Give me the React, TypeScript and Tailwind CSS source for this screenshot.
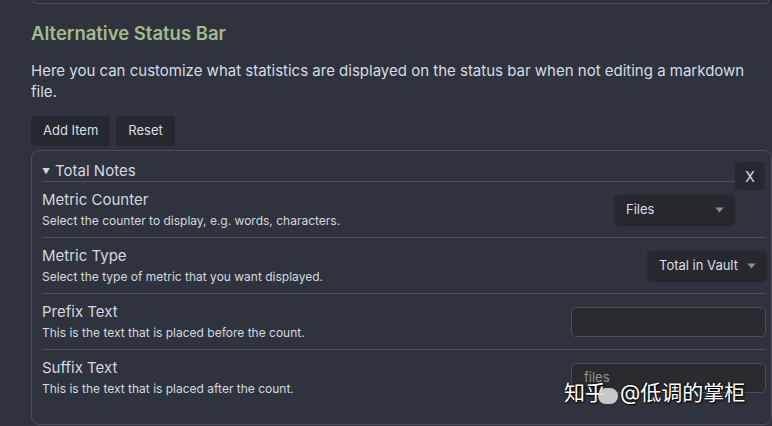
import React from "react";

function Select({ value, className = "" }: { value: string; className?: string }) {
  return (
    <div
      className={`flex h-[29px] items-center justify-between rounded-[4px] bg-[#26282d] pl-[11px] pr-[10px] text-[13px] text-[#dcdfe5] shadow-[0_1px_3px_rgba(0,0,0,0.45)] ${className}`}
    >
      <span>{value}</span>
      <svg width="9" height="6" viewBox="0 0 9 6" className="ml-2">
        <path d="M0.5 0.5 L8.5 0.5 L4.5 5.5 Z" fill="#8d919a" />
      </svg>
    </div>
  );
}

function Row({
  name,
  desc,
  control,
}: {
  name: string;
  desc: string;
  control: React.ReactNode;
}) {
  return (
    <div className="flex items-center justify-between border-t border-[#4b505b] pt-[8px] pb-[8px]">
      <div className="flex flex-col">
        <div className="text-[15px] leading-[20px] text-[#d4d8e0]">{name}</div>
        <div className="mt-[3px] text-[12px] leading-[16px] text-[#d6d9df]">{desc}</div>
      </div>
      {control}
    </div>
  );
}

export default function App() {
  return (
    <div
      className="relative h-[426px] w-[772px] overflow-hidden bg-[#2e333e]"
      style={{ fontFamily: "Inter, 'Noto Sans', 'Noto Sans CJK SC', sans-serif" }}
    >
      <div className="ml-[33px] mr-[3px] h-[4px] rounded-b-[6px] border-x border-b border-[#4b505b]" />
      <div className="pl-[31px]">
        <h2 className="mt-[17px] text-[18.5px] font-semibold leading-[24px] text-[#a3bb8b]">
          Alternative Status Bar
        </h2>
        <p className="mt-[15px] pr-[20px] text-[15px] leading-[21px] text-[#d8dce4]">
          Here you can customize what statistics are displayed on the status bar when not editing a markdown file.
        </p>
        <div className="mt-[14px] flex gap-[6px]">
          <button className="h-[30px] rounded-[4px] bg-[#25282f] px-[12px] text-[13px] text-[#dcdfe5]">
            Add Item
          </button>
          <button className="h-[30px] rounded-[4px] bg-[#25282f] px-[12px] text-[13px] text-[#dcdfe5]">
            Reset
          </button>
        </div>
        <div className="relative mt-[4px] h-[275px] rounded-[8px] border border-[#4b505b] pl-[10px] pr-[5px] pt-[10px]">
          <div className="flex h-[20px] items-center pb-[1px] text-[15px] leading-[20px] text-[#d4d8e0]">
            <span className="mr-[5px] text-[8px] leading-[20px]">▼</span>
            <span>Total Notes</span>
          </div>
          <button className="absolute right-[6px] top-[11px] h-[28px] w-[30px] rounded-[4px] bg-[#25282f] text-[14px] text-[#dcdfe5]">
            X
          </button>
          <Row
            name="Metric Counter"
            desc="Select the counter to display, e.g. words, characters."
            control={<Select value="Files" className="mr-[32px] w-[119px]" />}
          />
          <Row
            name="Metric Type"
            desc="Select the type of metric that you want displayed."
            control={<Select value="Total in Vault" className="w-[118px]" />}
          />
          <Row
            name="Prefix Text"
            desc="This is the text that is placed before the count."
            control={
              <div className="h-[30px] w-[195px] rounded-[5px] border border-[#4b4f58] bg-[#2a2b30]" />
            }
          />
          <Row
            name="Suffix Text"
            desc="This is the text that is placed after the count."
            control={
              <div className="flex h-[30px] w-[195px] items-center rounded-[5px] border border-[#4b4f58] bg-[#2a2b30] px-[12px] text-[13px] text-[#8f939b]">
                files
              </div>
            }
          />
        </div>
      </div>
      <div
        className="absolute left-[564px] top-[380px] flex items-center text-[21px] leading-[26px] text-white"
        style={{ textShadow: "0 0 2px #000, 1px 1px 2px #000" }}
      >
        <span>知乎</span>
        <span className="ml-[-8px] mr-[2px] mt-[6px] inline-block h-[16px] w-[20px] rounded-full bg-[#d8d8d8] opacity-90" />
        <span>@低调的掌柜</span>
      </div>
    </div>
  );
}
